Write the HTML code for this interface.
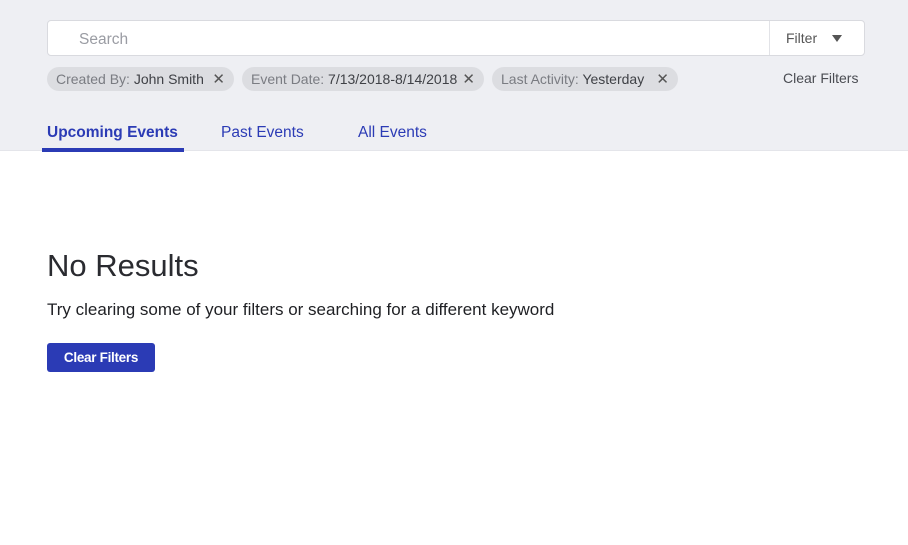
<!DOCTYPE html>
<html><head><style>
*{margin:0;padding:0;box-sizing:border-box}
body{width:908px;height:545px;background:#fff;font-family:"Liberation Sans",sans-serif;position:relative;overflow:hidden}
.hdr{position:absolute;left:0;top:0;width:908px;height:151px;background:#eeeff3;border-bottom:1px solid #e4e5ea}
.search{position:absolute;left:47px;top:20px;width:818px;height:36px;background:#fff;border:1px solid #d9dadf;border-radius:4px}
.search .ph{position:absolute;left:31px;top:10px;font-size:15.5px;color:#9a9ca3}
.search .flt{position:absolute;left:721px;top:0;width:95px;height:34px;border-left:1px solid #e2e3e7;font-size:14px;color:#555;padding:9px 0 0 16px}
.tri{position:absolute;left:62px;top:14px;width:0;height:0;border-left:5px solid transparent;border-right:5px solid transparent;border-top:7px solid #555}
.chip{position:absolute;top:67px;height:24px;border-radius:12px;background:#dcdde1;font-size:14px;color:#7a7c82;padding:4px 0 0 9px;white-space:nowrap}
.chip b{font-weight:normal;color:#3f4146}
.chip .x{position:absolute;right:9px;top:3px;color:#555;font-size:15px}
.clr{position:absolute;left:783px;top:70px;font-size:14px;color:#4a4c52}
.tab{position:absolute;top:124px;font-size:15.5px;color:#2b3bb5}
.ul{position:absolute;left:42px;top:148px;width:142px;height:4px;background:#2b3bb5}
h1{position:absolute;left:47px;top:248px;font-weight:normal;font-size:31px;color:#2a2b30}
p{position:absolute;left:47px;top:300px;font-size:17px;color:#1f2024}
.btn{position:absolute;left:47px;top:343px;width:108px;height:29px;background:#2b3bb5;color:#fff;border-radius:3px;font-size:13.5px;font-weight:bold;text-align:center;line-height:29px;letter-spacing:-0.3px}
</style></head><body>
<div class="hdr">
<div class="search"><span class="ph">Search</span><div class="flt">Filter<span class="tri"></span></div></div>
<div class="chip" style="left:47px;width:187px">Created By: <b>John Smith</b><span class="x">✕</span></div>
<div class="chip" style="left:242px;width:242px">Event Date: <b>7/13/2018-8/14/2018</b><span class="x">✕</span></div>
<div class="chip" style="left:492px;width:186px">Last Activity: <b>Yesterday</b><span class="x">✕</span></div>
<div class="clr">Clear Filters</div>
<div class="tab" style="left:47px;font-weight:bold">Upcoming Events</div>
<div class="tab" style="left:221px">Past Events</div>
<div class="tab" style="left:358px">All Events</div>
<div class="ul"></div>
</div>
<h1>No Results</h1>
<p>Try clearing some of your filters or searching for a different keyword</p>
<div class="btn">Clear Filters</div>
</body></html>
